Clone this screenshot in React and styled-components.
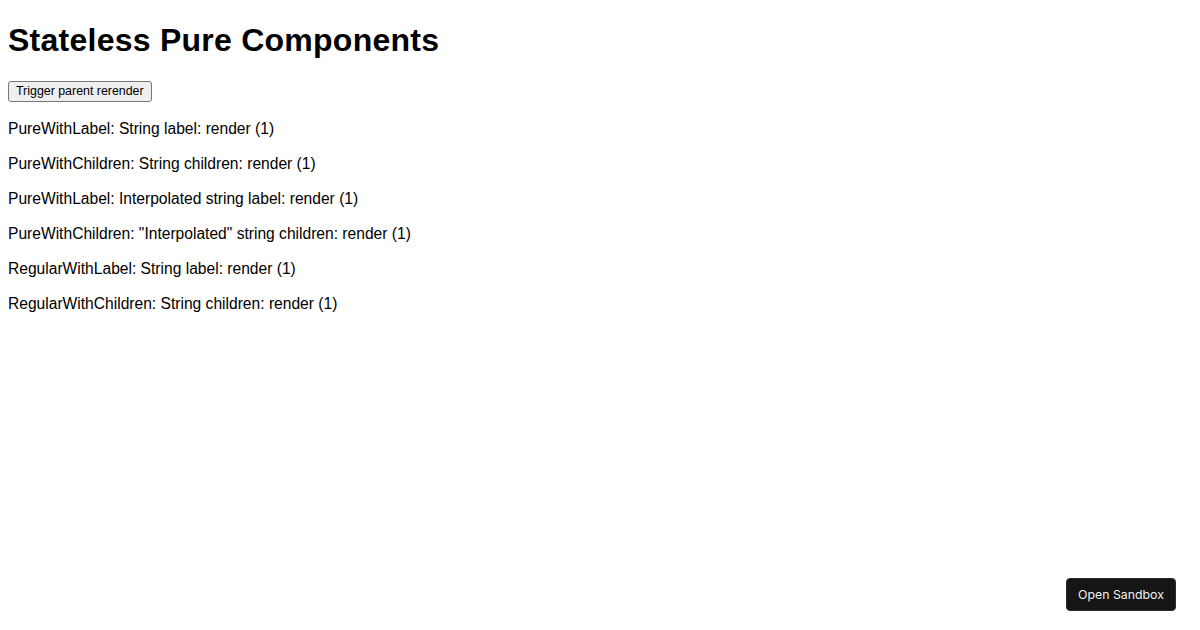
import React, { useState } from "react";
import styled, { createGlobalStyle } from "styled-components";

const GlobalStyle = createGlobalStyle`
  body {
    margin: 0;
    font-family: "Liberation Sans", Arial, sans-serif;
    color: #000;
    background: #fff;
  }
`;

const Page = styled.div`
  display: flow-root;
  padding: 0 8px;
`;

const Title = styled.h1`
  font-size: 32px;
  line-height: 38px;
  letter-spacing: 0.25px;
  font-weight: bold;
  margin: 21.44px 0;
`;

const TriggerButton = styled.button`
  display: block;
  height: 21px;
  margin-bottom: 17px;
  padding: 0 7px;
  border: 1px solid #767676;
  border-radius: 3px;
  background: #efefef;
  color: #000;
  font-family: "Liberation Sans", Arial, sans-serif;
  font-size: 12.4px;
  line-height: 19px;
`;

const Line = styled.p`
  font-size: 15.6px;
  line-height: 19px;
  margin: 16px 0;
`;

const SandboxButton = styled.button`
  position: fixed;
  right: 24px;
  bottom: 19px;
  width: 110px;
  height: 33px;
  border: 1px solid #2a2a2a;
  border-radius: 4px;
  background: #151515;
  color: #f2f2f2;
  font-family: Inter, "Liberation Sans", sans-serif;
  font-size: 12.3px;
  cursor: pointer;
`;

const rows = [
  "PureWithLabel: String label",
  "PureWithChildren: String children",
  "PureWithLabel: Interpolated string label",
  'PureWithChildren: "Interpolated" string children',
  "RegularWithLabel: String label",
  "RegularWithChildren: String children",
];

export default function App() {
  const [, setTick] = useState(0);
  return (
    <Page>
      <GlobalStyle />
      <Title>Stateless Pure Components</Title>
      <TriggerButton onClick={() => setTick(t => t + 1)}>
        Trigger parent rerender
      </TriggerButton>
      {rows.map(r => (
        <Line key={r}>{r}: render (1)</Line>
      ))}
      <SandboxButton>Open Sandbox</SandboxButton>
    </Page>
  );
}
